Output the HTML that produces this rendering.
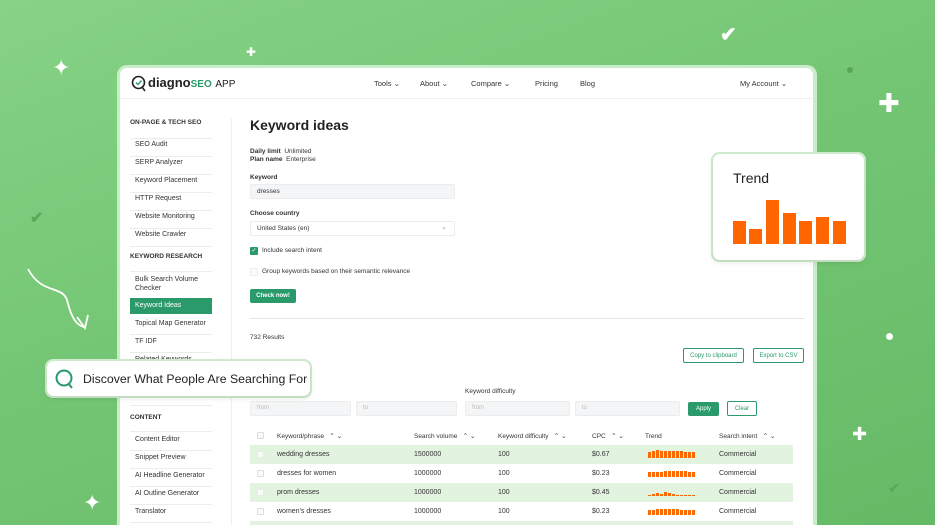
<!DOCTYPE html>
<html style="background:#66ba66"><head><meta charset="utf-8"><style>
*{margin:0;padding:0;box-sizing:border-box}
html,body{width:935px;height:525px;overflow:hidden}
body{position:relative;font-family:"Liberation Sans",sans-serif;background:linear-gradient(160deg,#86d286 0%,#74c674 45%,#66ba66 100%);color:#222}
.abs{position:absolute}
.win{left:117px;top:65px;width:700px;height:470px;background:#c9ecc9;border-radius:10px}
.inner{left:120px;top:68px;width:693px;height:470px;background:#fff;border-radius:7px;overflow:hidden}
.t{position:absolute;white-space:nowrap;font-size:7px;color:#333}
.side .t{left:15px}
.sl{position:absolute;left:10px;width:82px;height:1px;background:#ececec}
.inp{position:absolute;background:#f4f5f6;border:1px solid #ececec;border-radius:2px}
.btn{position:absolute;border:1px solid #2a9a6a;border-radius:2px;color:#2a9a6a;font-size:6px;display:flex;align-items:center;justify-content:center}
.row{position:absolute;left:130px;width:543px;height:19px}
.g{background:#e2f3e0}
.cb{position:absolute;width:7px;height:7px;border:1px solid #ddd;border-radius:1px;background:#fafafa}
.spark{position:absolute;color:#fff;font-size:22px;line-height:1}
.mini{position:absolute;height:8px;display:flex;align-items:flex-end;gap:1px}
.mini i{display:block;width:3px;background:#ff6a00}
</style></head><body>
<div class="spark" style="left:52px;top:57px">✦</div>
<div class="spark" style="left:878px;top:90px;font-size:26px">✚</div>
<div class="spark" style="left:246px;top:46px;font-size:12px">✚</div>
<div class="spark" style="left:852px;top:425px;font-size:18px">✚</div>
<div class="spark" style="left:83px;top:492px;font-size:22px">✦</div>
<div class="abs" style="left:886px;top:333px;width:7px;height:7px;border-radius:50%;background:#fff"></div>
<div class="abs" style="left:847px;top:67px;width:6px;height:6px;border-radius:50%;background:#5aa55a"></div>
<div class="abs" style="left:720px;top:22px;color:#fff;font-size:20px;font-weight:bold">✔</div>
<div class="abs" style="left:30px;top:208px;color:#5aa85a;font-size:16px;font-weight:bold">✔</div>
<div class="abs" style="left:888px;top:480px;color:#5aa85a;font-size:14px;font-weight:bold">✔</div>
<svg class="abs" style="left:22px;top:265px" width="75" height="70"><path d="M6 4 C20 30 40 20 45 35 C50 55 55 60 62 62 M55 52 L63 63 L66 50" stroke="#fff" stroke-width="1.8" fill="none"/></svg>

<div class="abs win"></div>
<div class="abs inner">
 <div class="abs" style="left:0;top:0;width:693px;height:31px;border-bottom:1px solid #eee"></div>
 <svg class="abs" style="left:11px;top:7px" width="16" height="17"><circle cx="7.5" cy="7.5" r="6" stroke="#222" stroke-width="1.6" fill="none"/><path d="M11 12 L14 16" stroke="#222" stroke-width="1.6"/><path d="M5 7.5 L7 9.5 L10.5 5.5" stroke="#2a9a6a" stroke-width="1.4" fill="none"/></svg>
 <div class="t" style="left:28px;top:7px;font-size:13px;font-weight:bold;color:#222">diagno<span style="color:#2a9a6a;font-size:10px">SEO</span> <span style="font-size:10px;font-weight:normal">APP</span></div>
 <div class="t" style="left:254px;top:11px;font-size:7.5px">Tools ⌄</div>
 <div class="t" style="left:300px;top:11px;font-size:7.5px">About ⌄</div>
 <div class="t" style="left:351px;top:11px;font-size:7.5px">Compare ⌄</div>
 <div class="t" style="left:415px;top:11px;font-size:7.5px">Pricing</div>
 <div class="t" style="left:460px;top:11px;font-size:7.5px">Blog</div>
 <div class="t" style="left:620px;top:11px;font-size:7.5px">My Account ⌄</div>
 <div class="side">
 <div class="t" style="left:10px;top:51px;font-size:6.5px;font-weight:bold">ON-PAGE &amp; TECH SEO</div>
 <div class="sl" style="top:70px"></div>
 <div class="t" style="top:73px">SEO Audit</div><div class="sl" style="top:88px"></div>
 <div class="t" style="top:91px">SERP Analyzer</div><div class="sl" style="top:106px"></div>
 <div class="t" style="top:109px">Keyword Placement</div><div class="sl" style="top:124px"></div>
 <div class="t" style="top:127px">HTTP Request</div><div class="sl" style="top:142px"></div>
 <div class="t" style="top:145px">Website Monitoring</div><div class="sl" style="top:160px"></div>
 <div class="t" style="top:163px">Website Crawler</div><div class="sl" style="top:178px"></div>
 <div class="t" style="left:10px;top:185px;font-size:6.5px;font-weight:bold">KEYWORD RESEARCH</div>
 <div class="sl" style="top:203px"></div>
 <div class="t" style="top:207px;line-height:9px">Bulk Search Volume<br>Checker</div>
 <div class="abs" style="left:10px;top:230px;width:82px;height:16px;background:#2a9a6a"></div>
 <div class="t" style="top:234px;color:#fff">Keyword Ideas</div>
 <div class="t" style="top:252px">Topical Map Generator</div><div class="sl" style="top:266px"></div>
 <div class="t" style="top:270px">TF IDF</div><div class="sl" style="top:284px"></div>
 <div class="t" style="top:288px">Related Keywords</div>
 <div class="sl" style="top:337px"></div>
 <div class="t" style="left:10px;top:346px;font-size:6.5px;font-weight:bold">CONTENT</div>
 <div class="sl" style="top:363px"></div>
 <div class="t" style="top:368px">Content Editor</div><div class="sl" style="top:382px"></div>
 <div class="t" style="top:386px">Snippet Preview</div><div class="sl" style="top:400px"></div>
 <div class="t" style="top:404px">AI Headline Generator</div><div class="sl" style="top:418px"></div>
 <div class="t" style="top:422px">AI Outline Generator</div><div class="sl" style="top:436px"></div>
 <div class="t" style="top:440px">Translator</div><div class="sl" style="top:454px"></div>
 </div>
 <div class="abs" style="left:111px;top:50px;width:1px;height:420px;background:#eee"></div>
 <div class="t" style="left:130px;top:49px;font-size:14px;font-weight:bold;color:#222">Keyword ideas</div>
 <div class="t" style="left:130px;top:80px;font-size:6.5px"><b>Daily limit</b>&nbsp; Unlimited</div>
 <div class="t" style="left:130px;top:88px;font-size:6.5px"><b>Plan name</b>&nbsp; Enterprise</div>
 <div class="t" style="left:130px;top:106px;font-size:6.5px;font-weight:bold">Keyword</div>
 <div class="inp" style="left:130px;top:116px;width:205px;height:15px"></div>
 <div class="t" style="left:137px;top:120px;font-size:6.5px">dresses</div>
 <div class="t" style="left:130px;top:142px;font-size:6.5px;font-weight:bold">Choose country</div>
 <div class="inp" style="left:130px;top:153px;width:205px;height:15px;background:#fff"></div>
 <div class="t" style="left:137px;top:157px;font-size:6.5px">United States (en)</div>
 <div class="t" style="left:321px;top:155px;font-size:7px;color:#999">⌄</div>
 <div class="abs" style="left:130px;top:179px;width:8px;height:8px;background:#2a9a6a;border-radius:1px;color:#fff;font-size:6px;text-align:center;line-height:8px">✓</div>
 <div class="t" style="left:142px;top:179px;font-size:6.5px">Include search intent</div>
 <div class="cb" style="left:130px;top:200px;width:8px;height:8px;border-color:#eee"></div>
 <div class="t" style="left:142px;top:200px;font-size:6.5px">Group keywords based on their semantic relevance</div>
 <div class="abs" style="left:130px;top:221px;width:46px;height:14px;background:#2a9a6a;border-radius:2px;color:#fff;font-size:6px;font-weight:bold;text-align:center;line-height:14px">Check now!</div>
 <div class="abs" style="left:130px;top:250px;width:555px;height:1px;background:#e6e6e6"></div>
 <div class="t" style="left:130px;top:266px;font-size:6.5px">732 Results</div>
 <div class="btn" style="left:563px;top:280px;width:61px;height:15px">Copy to clipboard</div>
 <div class="btn" style="left:633px;top:280px;width:51px;height:15px">Export to CSV</div>
 <div class="t" style="left:345px;top:320px;font-size:6.5px">Keyword difficulty</div>
 <div class="inp" style="left:130px;top:333px;width:101px;height:15px"></div><div class="t" style="left:137px;top:337px;color:#bbb;font-size:6px">from</div>
 <div class="inp" style="left:236px;top:333px;width:101px;height:15px"></div><div class="t" style="left:243px;top:337px;color:#bbb;font-size:6px">to</div>
 <div class="inp" style="left:345px;top:333px;width:105px;height:15px"></div><div class="t" style="left:352px;top:337px;color:#bbb;font-size:6px">from</div>
 <div class="inp" style="left:455px;top:333px;width:105px;height:15px"></div><div class="t" style="left:462px;top:337px;color:#bbb;font-size:6px">to</div>
 <div class="abs" style="left:568px;top:334px;width:31px;height:14px;background:#2a9a6a;border-radius:2px;color:#fff;font-size:6px;text-align:center;line-height:14px">Apply</div>
 <div class="btn" style="left:607px;top:333px;width:30px;height:15px">Clear</div>
 <div class="cb" style="left:137px;top:364px"></div>
 <div class="t" style="left:157px;top:364px;font-size:6.5px">Keyword/phrase &nbsp; ⌃ ⌄</div>
 <div class="t" style="left:294px;top:364px;font-size:6.5px">Search volume &nbsp; ⌃ ⌄</div>
 <div class="t" style="left:378px;top:364px;font-size:6.5px">Keyword difficulty &nbsp; ⌃ ⌄</div>
 <div class="t" style="left:472px;top:364px;font-size:6.5px">CPC &nbsp; ⌃ ⌄</div>
 <div class="t" style="left:525px;top:365px;font-size:6.5px">Trend</div>
 <div class="t" style="left:599px;top:364px;font-size:6.5px">Search intent &nbsp; ⌃ ⌄</div>
 <div class="row g" style="top:377px"></div>
 <div class="row" style="top:396px"></div>
 <div class="row g" style="top:415px"></div>
 <div class="row" style="top:434px"></div>
 <div class="row g" style="top:453px"></div>
 <div class="cb" style="left:137px;top:383px;border-color:#e6eee6"></div><div class="t" style="left:157px;top:383px">wedding dresses</div><div class="t" style="left:294px;top:383px">1500000</div><div class="t" style="left:378px;top:383px">100</div><div class="t" style="left:472px;top:383px">$0.67</div><div class="t" style="left:599px;top:383px">Commercial</div>
 <div class="mini" style="left:528px;top:382px"><i style="height:6px"></i><i style="height:7px"></i><i style="height:8px"></i><i style="height:7px"></i><i style="height:7px"></i><i style="height:7px"></i><i style="height:7px"></i><i style="height:7px"></i><i style="height:7px"></i><i style="height:6px"></i><i style="height:6px"></i><i style="height:6px"></i></div>
 <div class="cb" style="left:137px;top:402px"></div><div class="t" style="left:157px;top:402px">dresses for women</div><div class="t" style="left:294px;top:402px">1000000</div><div class="t" style="left:378px;top:402px">100</div><div class="t" style="left:472px;top:402px">$0.23</div><div class="t" style="left:599px;top:402px">Commercial</div>
 <div class="mini" style="left:528px;top:401px"><i style="height:5px"></i><i style="height:5px"></i><i style="height:5px"></i><i style="height:5px"></i><i style="height:6px"></i><i style="height:6px"></i><i style="height:6px"></i><i style="height:6px"></i><i style="height:6px"></i><i style="height:6px"></i><i style="height:5px"></i><i style="height:5px"></i></div>
 <div class="cb" style="left:137px;top:421px;border-color:#e6eee6"></div><div class="t" style="left:157px;top:421px">prom dresses</div><div class="t" style="left:294px;top:421px">1000000</div><div class="t" style="left:378px;top:421px">100</div><div class="t" style="left:472px;top:421px">$0.45</div><div class="t" style="left:599px;top:421px">Commercial</div>
 <div class="mini" style="left:528px;top:420px"><i style="height:1px"></i><i style="height:2px"></i><i style="height:3px"></i><i style="height:2px"></i><i style="height:4px"></i><i style="height:3px"></i><i style="height:2px"></i><i style="height:1px"></i><i style="height:1px"></i><i style="height:1px"></i><i style="height:1px"></i><i style="height:1px"></i></div>
 <div class="cb" style="left:137px;top:440px"></div><div class="t" style="left:157px;top:440px">women's dresses</div><div class="t" style="left:294px;top:440px">1000000</div><div class="t" style="left:378px;top:440px">100</div><div class="t" style="left:472px;top:440px">$0.23</div><div class="t" style="left:599px;top:440px">Commercial</div>
 <div class="mini" style="left:528px;top:439px"><i style="height:5px"></i><i style="height:5px"></i><i style="height:6px"></i><i style="height:6px"></i><i style="height:6px"></i><i style="height:6px"></i><i style="height:6px"></i><i style="height:6px"></i><i style="height:5px"></i><i style="height:5px"></i><i style="height:5px"></i><i style="height:5px"></i></div>
</div>

<div class="abs" style="left:711px;top:152px;width:155px;height:110px;border-radius:8px;background:#d2efd2"></div>
<div class="abs" style="left:713px;top:154px;width:151px;height:106px;border-radius:7px;background:#fff;box-shadow:0 2px 6px rgba(0,0,0,.12)"></div>
<div class="t" style="left:733px;top:170px;font-size:14px;color:#222">Trend</div>
<div class="abs" style="left:733px;top:221px;width:13px;height:23px;background:#ff6600"></div>
<div class="abs" style="left:749px;top:229px;width:13px;height:15px;background:#ff6600"></div>
<div class="abs" style="left:766px;top:200px;width:13px;height:44px;background:#ff6600"></div>
<div class="abs" style="left:783px;top:213px;width:13px;height:31px;background:#ff6600"></div>
<div class="abs" style="left:799px;top:221px;width:13px;height:23px;background:#ff6600"></div>
<div class="abs" style="left:816px;top:217px;width:13px;height:27px;background:#ff6600"></div>
<div class="abs" style="left:833px;top:221px;width:13px;height:23px;background:#ff6600"></div>

<div class="abs" style="left:45px;top:359px;width:267px;height:39px;border-radius:8px;background:#d2efd2"></div>
<div class="abs" style="left:47px;top:361px;width:263px;height:35px;border-radius:7px;background:#fff;box-shadow:0 2px 6px rgba(0,0,0,.12)"></div>
<svg class="abs" style="left:54px;top:368px" width="22" height="22"><circle cx="10" cy="10" r="7.5" stroke="#2a9a6a" stroke-width="2" fill="none"/><path d="M14 15 L18 20" stroke="#2a9a6a" stroke-width="2"/></svg>
<div class="t" style="left:83px;top:372px;font-size:12.3px;color:#222">Discover What People Are Searching For</div>
</body></html>
